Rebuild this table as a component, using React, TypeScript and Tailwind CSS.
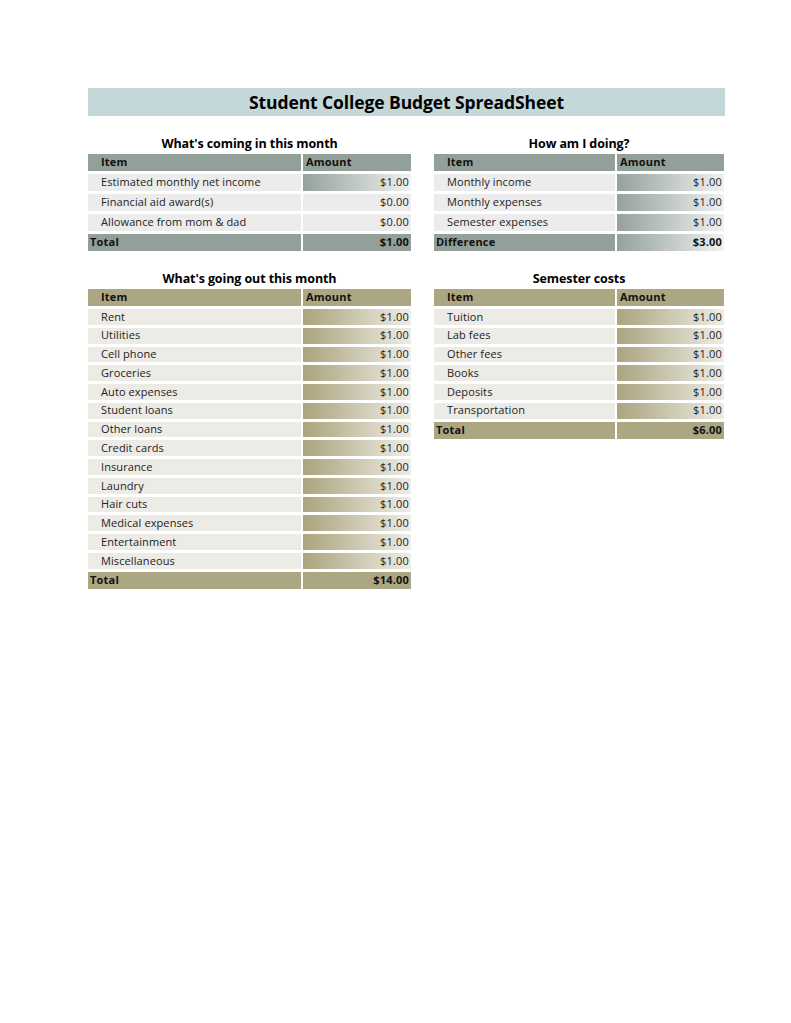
import React from "react";

type Row = { item: string; amount: string; bar: boolean };

const GREY = {
  head: "bg-[#939f99]",
  row: "bg-[#ebeceb]",
  bar: "bg-gradient-to-r from-[#95a29b] to-[#f1f2f1]",
};
const KHAKI = {
  head: "bg-[#aca683]",
  row: "bg-[#ecebe5]",
  bar: "bg-gradient-to-r from-[#aba47f] to-[#eeede6]",
};

function Table({
  title,
  rows,
  totalLabel,
  total,
  totalBar,
  theme,
  itemW,
  amountW,
  rowH,
}: {
  title: string;
  rows: Row[];
  totalLabel: string;
  total: string;
  totalBar: boolean;
  theme: typeof GREY;
  itemW: string;
  amountW: string;
  rowH: string;
}) {
  return (
    <div className="flex flex-col">
      <div className="h-[20px] flex items-center justify-center text-[12.5px] font-bold text-black leading-none tracking-[-0.1px]">
        {title}
      </div>
      <div className="flex gap-[2px] h-[17px] mb-[3px]">
        <div className={`${itemW} ${theme.head} pl-[13px] flex items-center text-[11px] font-bold text-[#111] tracking-[0.2px]`}>
          Item
        </div>
        <div className={`${amountW} ${theme.head} pl-[3px] flex items-center text-[11px] font-bold text-[#111] tracking-[0.2px]`}>
          Amount
        </div>
      </div>
      <div className="flex flex-col gap-[3px]">
        {rows.map((r) => (
          <div key={r.item} className={`flex gap-[2px] ${rowH}`}>
            <div className={`${itemW} ${theme.row} pl-[13px] flex items-center text-[11px] text-[#222] tracking-[0.1px]`}>
              {r.item}
            </div>
            <div
              className={`${amountW} ${r.bar ? theme.bar : theme.row} pr-[2px] flex items-center justify-end text-[11px] text-[#222] tracking-[0.2px]`}
            >
              {r.amount}
            </div>
          </div>
        ))}
        <div className="flex gap-[2px] h-[17px]">
          <div className={`${itemW} ${theme.head} pl-[2px] flex items-center text-[11px] font-bold text-[#111] tracking-[0.2px]`}>
            {totalLabel}
          </div>
          <div
            className={`${amountW} ${totalBar ? theme.bar : theme.head} pr-[2px] flex items-center justify-end text-[11px] font-bold text-[#111] tracking-[0.2px]`}
          >
            {total}
          </div>
        </div>
      </div>
    </div>
  );
}

const r = (item: string, amount = "$1.00", bar = true): Row => ({ item, amount, bar });

export default function App() {
  return (
    <div
      className="w-[791px] h-[1023px] bg-white pl-[88px] pt-[88px]"
      style={{ fontFamily: '"Open Sans", "Liberation Sans", sans-serif' }}
    >
      <div className="w-[637px] h-[28px] bg-[#c4d8d9] flex items-center justify-center text-[17.5px] font-bold text-black tracking-[-0.1px]">
        Student College Budget SpreadSheet
      </div>
      <div className="flex gap-[23px] mt-[18px]">
        <div className="w-[323px] flex flex-col gap-[18px]">
          <Table
            title="What's coming in this month"
            rows={[
              r("Estimated monthly net income"),
              r("Financial aid award(s)", "$0.00", false),
              r("Allowance from mom & dad", "$0.00", false),
            ]}
            totalLabel="Total"
            total="$1.00"
            totalBar={false}
            theme={GREY}
            itemW="w-[213px]"
            amountW="w-[108px]"
            rowH="h-[17px]"
          />
          <Table
            title="What's going out this month"
            rows={[
              r("Rent"),
              r("Utilities"),
              r("Cell phone"),
              r("Groceries"),
              r("Auto expenses"),
              r("Student loans"),
              r("Other loans"),
              r("Credit cards"),
              r("Insurance"),
              r("Laundry"),
              r("Hair cuts"),
              r("Medical expenses"),
              r("Entertainment"),
              r("Miscellaneous"),
            ]}
            totalLabel="Total"
            total="$14.00"
            totalBar={false}
            theme={KHAKI}
            itemW="w-[213px]"
            amountW="w-[108px]"
            rowH="h-[15.77px]"
          />
        </div>
        <div className="w-[290px] flex flex-col gap-[18px]">
          <Table
            title="How am I doing?"
            rows={[r("Monthly income"), r("Monthly expenses"), r("Semester expenses")]}
            totalLabel="Difference"
            total="$3.00"
            totalBar={true}
            theme={GREY}
            itemW="w-[181px]"
            amountW="w-[107px]"
            rowH="h-[17px]"
          />
          <Table
            title="Semester costs"
            rows={[
              r("Tuition"),
              r("Lab fees"),
              r("Other fees"),
              r("Books"),
              r("Deposits"),
              r("Transportation"),
            ]}
            totalLabel="Total"
            total="$6.00"
            totalBar={false}
            theme={KHAKI}
            itemW="w-[181px]"
            amountW="w-[107px]"
            rowH="h-[15.77px]"
          />
        </div>
      </div>
    </div>
  );
}
